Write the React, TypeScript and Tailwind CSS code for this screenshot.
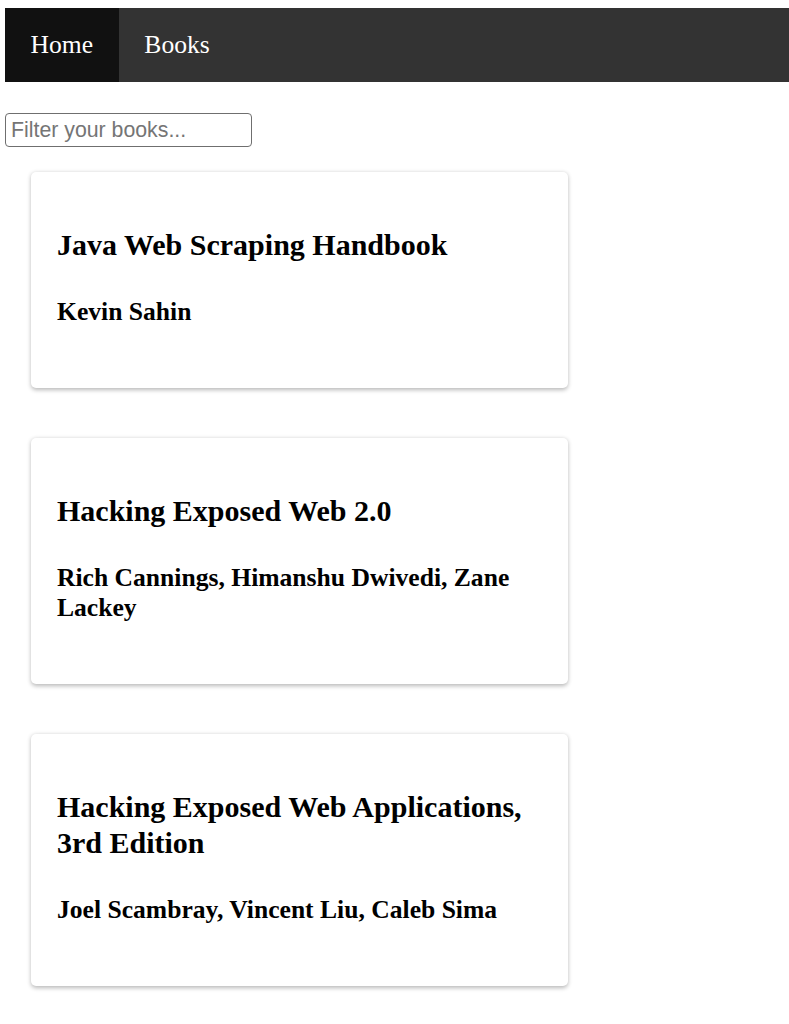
import React from "react";

const books = [
  { title: "Java Web Scraping Handbook", authors: "Kevin Sahin" },
  { title: "Hacking Exposed Web 2.0", authors: "Rich Cannings, Himanshu Dwivedi, Zane Lackey" },
  { title: "Hacking Exposed Web Applications, 3rd Edition", authors: "Joel Scambray, Vincent Liu, Caleb Sima" },
];

export default function App() {
  return (
    <div className="min-h-[1024px] bg-white pt-[8px] pl-[5px]" style={{ fontFamily: '"Liberation Serif", "Times New Roman", serif' }}>
      <nav className="flex bg-[#333333]">
        <a className="block bg-[#111111] px-[25.6px] py-[22.4px] text-[25.6px] leading-[29.4px] text-white" href="#">Home</a>
        <a className="block px-[25.6px] py-[22.4px] text-[25.6px] leading-[29.4px] text-white" href="#">Books</a>
      </nav>
      <div className="mt-[31px]">
        <input
          type="text"
          placeholder="Filter your books..."
          className="block h-[34px] w-[247px] rounded-[4px] border-[1.6px] border-[#6f6f6f] px-[5px] text-[21.3px] text-black placeholder:text-[#757575] outline-none"
          style={{ fontFamily: '"Liberation Sans", Arial, sans-serif' }}
        />
      </div>
      <div className="ml-[26px] mt-[25px] flex w-[537px] flex-col gap-[50px]">
        {books.map((b) => (
          <div key={b.title} className="flex flex-col rounded-[5px] bg-white px-[26px] pt-[55px] pb-[61px] shadow-[0_1.5px_4px_rgba(0,0,0,0.28)]">
            <h3 className="text-[30px] font-bold leading-[36px] text-black">{b.title}</h3>
            <h4 className="mt-[34px] text-[25.6px] font-bold leading-[30px] text-black">{b.authors}</h4>
          </div>
        ))}
      </div>
    </div>
  );
}
